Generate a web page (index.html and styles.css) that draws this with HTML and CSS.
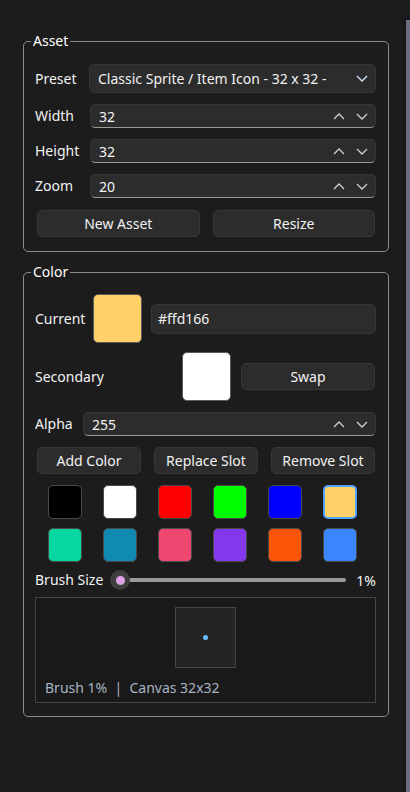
FILE: index.html
```html
<!doctype html>
<html>
<head>
<meta charset="UTF-8">
<title>sprite editor - side panel</title>
<link rel="stylesheet" href="styles.css">
</head>
<body>
<div class="panel">
  <fieldset class="group asset">
    <legend>Asset</legend>
    <div class="form">
      <span class="lbl">Preset</span>
      <div class="combo">
        <span class="val">Classic Sprite / Item Icon - 32 x 32 -</span>
        <svg class="chev" width="12" height="7" viewBox="0 0 12 7"><path d="M1 1 L6 6 L11 1" fill="none" stroke="#d6e6ff" stroke-width="1.3"/></svg>
      </div>
      <span class="lbl">Width</span>
      <div class="spin"><span class="val">32</span>
        <svg class="arr" width="36" height="7" viewBox="0 0 36 7"><path d="M1 6 L6 1 L11 6" fill="none" stroke="#cfcfcf" stroke-width="1.3"/><path d="M24 1 L29 6 L34 1" fill="none" stroke="#cfcfcf" stroke-width="1.3"/></svg>
      </div>
      <span class="lbl">Height</span>
      <div class="spin"><span class="val">32</span>
        <svg class="arr" width="36" height="7" viewBox="0 0 36 7"><path d="M1 6 L6 1 L11 6" fill="none" stroke="#cfcfcf" stroke-width="1.3"/><path d="M24 1 L29 6 L34 1" fill="none" stroke="#cfcfcf" stroke-width="1.3"/></svg>
      </div>
      <span class="lbl">Zoom</span>
      <div class="spin"><span class="val">20</span>
        <svg class="arr" width="36" height="7" viewBox="0 0 36 7"><path d="M1 6 L6 1 L11 6" fill="none" stroke="#cfcfcf" stroke-width="1.3"/><path d="M24 1 L29 6 L34 1" fill="none" stroke="#cfcfcf" stroke-width="1.3"/></svg>
      </div>
    </div>
    <div class="btns two">
      <button>New Asset</button>
      <button>Resize</button>
    </div>
  </fieldset>

  <fieldset class="group color">
    <legend>Color</legend>
    <div class="row current">
      <span class="lbl">Current</span>
      <div class="big-swatch yellow"></div>
      <div class="line-edit">#ffd166</div>
    </div>
    <div class="row secondary">
      <span class="lbl">Secondary</span>
      <div class="big-swatch white"></div>
      <button class="swap">Swap</button>
    </div>
    <div class="row alpha">
      <span class="lbl">Alpha</span>
      <div class="spin"><span class="val">255</span>
        <svg class="arr" width="36" height="7" viewBox="0 0 36 7"><path d="M1 6 L6 1 L11 6" fill="none" stroke="#cfcfcf" stroke-width="1.3"/><path d="M24 1 L29 6 L34 1" fill="none" stroke="#cfcfcf" stroke-width="1.3"/></svg>
      </div>
    </div>
    <div class="btns three">
      <button>Add Color</button>
      <button>Replace Slot</button>
      <button>Remove Slot</button>
    </div>
    <div class="palette">
      <div class="sw" style="background:#000000"></div>
      <div class="sw" style="background:#ffffff"></div>
      <div class="sw" style="background:#ff0000"></div>
      <div class="sw" style="background:#00ff00"></div>
      <div class="sw" style="background:#0000ff"></div>
      <div class="sw sel" style="background:#ffd166"></div>
      <div class="sw" style="background:#06d6a0"></div>
      <div class="sw" style="background:#118ab2"></div>
      <div class="sw" style="background:#ef476f"></div>
      <div class="sw" style="background:#8338ec"></div>
      <div class="sw" style="background:#fb5607"></div>
      <div class="sw" style="background:#3a86ff"></div>
    </div>
    <div class="row brush">
      <span class="lbl">Brush Size</span>
      <div class="slider">
        <div class="track"></div>
        <div class="handle"><div class="knob"></div></div>
      </div>
      <span class="pct">1%</span>
    </div>
    <div class="preview">
      <div class="canvas"><div class="dot"></div></div>
      <div class="caption">Brush 1% &nbsp;|&nbsp; Canvas 32x32</div>
    </div>
  </fieldset>
</div>
<div class="edge"><div class="edge-bar"></div></div>
</body>
</html>
```

FILE: styles.css
```css
html, body { margin: 0; height: 100%; }
body { background: #1c1c1c; color: #f2f2f2; font-family: "Noto Sans", "Open Sans", sans-serif; font-size: 14px; display: flex; overflow: hidden; }

.panel { width: 403px; padding-top: 32px; box-sizing: border-box; }

.group { margin: 0 0 0 23px; width: 366px; box-sizing: border-box; border: 1px solid #8a8a8a; border-radius: 5px; padding: 14px 12px 14px 11px; min-width: 0; }
.group legend { padding: 0 2px; margin-left: -4px; line-height: 18px; font-size: 14px; color: #ffffff; }
.group.color { margin-top: 11px; padding-top: 13px; padding-bottom: 13px; }

.form { display: grid; grid-template-columns: 54px 1fr; row-gap: 11px; align-items: center; }
.lbl { white-space: nowrap; line-height: 18px; }

.combo, .spin, .line-edit { background: #2c2c2c; border: 1px solid #353535; border-radius: 5px; box-sizing: border-box; display: flex; align-items: center; }
.combo { height: 29px; padding: 0 7px 0 8px; }
.spin { height: 24px; padding: 0 6px 0 8px; border-bottom-color: #9a9a9a; margin-left: 1px; }
.val { flex: 1; white-space: nowrap; overflow: hidden; }
.chev { margin-left: 6px; }
.arr { flex: none; }

button { font: inherit; color: #f2f2f2; background: #2c2c2c; border: 1px solid #383838; border-radius: 5px; height: 27px; padding: 0; cursor: pointer; }
.btns { display: grid; gap: 13px; margin: 12px 1px 0 2px; }
.btns.two { grid-template-columns: 1fr 1fr; }
.btns.three { grid-template-columns: 1fr 1fr 1fr; margin-top: 11px; }

.row { display: flex; align-items: center; }
.current .lbl { width: 58px; }
.big-swatch { width: 49px; height: 49px; box-sizing: border-box; border: 1px solid #5a5a5a; border-radius: 5px; flex: none; }
.yellow { background: #ffd166; }
.white { background: #ffffff; }
.line-edit { flex: 1; height: 30px; margin-left: 9px; padding-left: 6px; }
.secondary { margin-top: 9px; }
.secondary .lbl { width: 147px; }
.swap { flex: 1; margin-left: 10px; margin-right: 1px; }
.alpha { margin-top: 11px; }
.alpha .lbl { width: 48px; }
.alpha .spin { flex: 1; margin-left: 0; }

.palette { display: grid; grid-template-columns: repeat(6, 34px); column-gap: 21px; row-gap: 9px; margin: 11px 0 0 13px; }
.sw { width: 34px; height: 34px; box-sizing: border-box; border: 1px solid #4a4a4a; border-radius: 5px; }
.sw.sel { border: 2px solid #4da3ff; }

.brush { margin-top: 8px; height: 20px; }
.brush .lbl { width: 75px; }
.slider { flex: 1; position: relative; height: 20px; }
.track { position: absolute; left: 12px; right: 0; top: 8px; height: 4px; background: #9a9a9a; border-radius: 2px; }
.handle { position: absolute; left: 0; top: 0; width: 20px; height: 20px; border-radius: 50%; background: #3e3e3e; display: flex; align-items: center; justify-content: center; }
.knob { width: 9px; height: 9px; border-radius: 50%; background: #dea2e8; }
.pct { width: 30px; text-align: right; }

.preview { margin-top: 7px; height: 106px; box-sizing: border-box; border: 1px solid #444; background: #191919; padding-top: 9px; display: flex; flex-direction: column; }
.canvas { width: 61px; height: 61px; box-sizing: border-box; border: 1px solid #444; background: #242424; margin: 0 auto; display: flex; align-items: center; justify-content: center; }
.dot { width: 5px; height: 5px; border-radius: 50%; background: #6cbcff; }
.caption { margin-top: 11px; padding-left: 9px; color: #a8b4c2; line-height: 18px; }

.edge { flex: 1; display: flex; padding-top: 17px; }
.edge-bar { flex: 1; border-left: 3px solid #16161b; border-top: 3px solid #16161b; background: #6c6c82; }
```
